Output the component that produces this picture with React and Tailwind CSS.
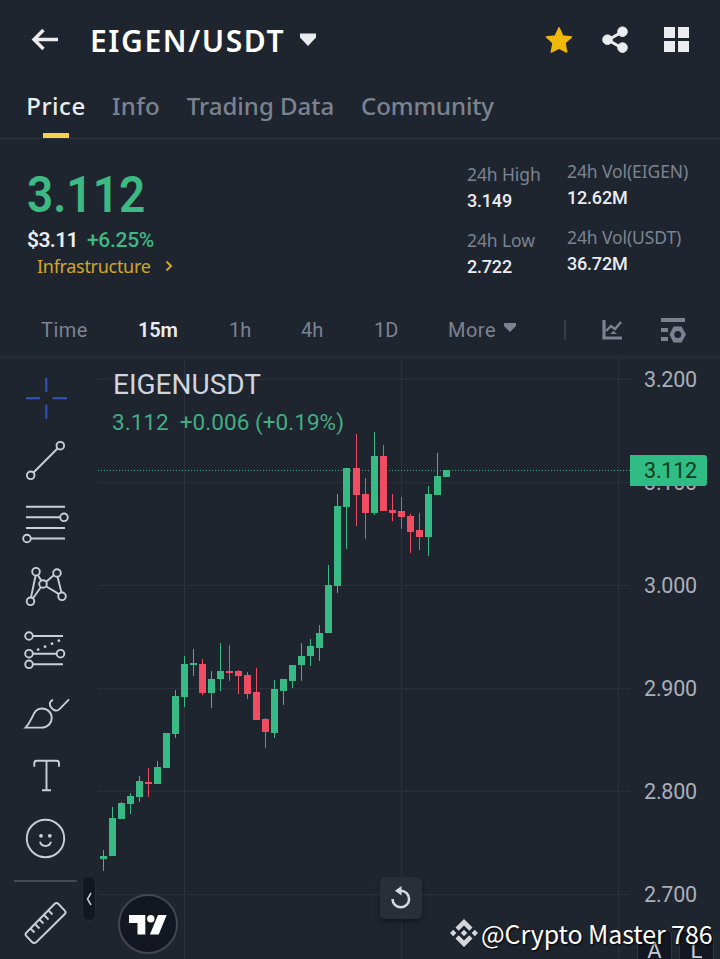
const TABS = [
  { label: "Price", active: true, style: "w-[58px] tracking-[0.5px]" },
  { label: "Info", style: "w-[48px] tracking-[0.3px]" },
  { label: "Trading Data", style: "w-[147px]" },
  { label: "Community", style: "w-[133px] tracking-[-0.1px]" },
];

const PRICES = ["3.200", "3.100", "3.000", "2.900", "2.800", "2.700"];

// [direction, wick top, body top, body bottom, wick bottom]
const CANDLES = [
  ["up", 850, 856, 859, 871],
  ["up", 807, 818, 856, 856],
  ["up", 802, 803, 819, 819],
  ["up", 793, 796, 804, 814],
  ["up", 776, 781, 797, 802],
  ["down", 768, 782, 784, 797],
  ["up", 761, 767, 784, 784],
  ["up", 733, 733, 768, 768],
  ["up", 690, 696, 734, 738],
  ["up", 656, 664, 697, 707],
  ["up", 649, 663, 665, 676],
  ["down", 659, 664, 693, 695],
  ["up", 671, 679, 693, 708],
  ["up", 643, 671, 679, 691],
  ["down", 645, 671, 673, 681],
  ["down", 670, 671, 676, 694],
  ["down", 672, 675, 694, 699],
  ["down", 668, 692, 720, 720],
  ["down", 718, 719, 732, 748],
  ["up", 680, 689, 733, 738],
  ["up", 679, 679, 691, 705],
  ["up", 665, 665, 681, 688],
  ["up", 643, 656, 665, 681],
  ["up", 639, 646, 656, 666],
  ["up", 625, 633, 648, 661],
  ["up", 565, 585, 633, 633],
  ["up", 494, 506, 586, 593],
  ["up", 468, 468, 507, 549],
  ["down", 434, 468, 495, 526],
  ["down", 478, 494, 513, 539],
  ["up", 432, 456, 513, 515],
  ["down", 445, 456, 511, 511],
  ["down", 494, 510, 513, 521],
  ["down", 497, 511, 517, 529],
  ["down", 514, 516, 532, 553],
  ["down", 513, 530, 537, 550],
  ["up", 486, 494, 537, 556],
  ["up", 453, 476, 495, 495],
  ["up", 470, 470, 477, 477],
];

function Header() {
  return (
    <header className="flex h-[80px] items-center">
      <svg viewBox="0 0 28 24" className="ml-[31px] h-6 w-7" fill="none" stroke="#eaecef" strokeWidth="3.4">
        <path d="M27 11.5H3M12.5 2L3 11.5l9.5 9.5" />
      </svg>
      <h1 className="ml-[31px] mt-[2px] w-[196px] whitespace-nowrap font-['Noto_Sans',sans-serif] text-[30px] font-semibold leading-[40px] tracking-[1.6px] text-white">
        EIGEN/USDT
      </h1>
      <svg viewBox="0 0 18 14" className="ml-[13px] h-[14px] w-[18px]" fill="#eaecef">
        <path d="M1 .5h16v4L9 13 1 4.5z" />
      </svg>
      <svg viewBox="0 0 28 28" className="ml-[228px] h-7 w-7" fill="#f0b90b" stroke="#f0b90b" strokeWidth="1.5" strokeLinejoin="round">
        <path d="M14 1.8l3.7 8.300 8.800.9-6.600 6 1.800 9-7.700-3.800L6.300 26l1.800-9-6.600-6 8.800-.9z" />
      </svg>
      <svg viewBox="0 0 28 28" className="ml-7 h-7 w-7" fill="#eaecef" stroke="#eaecef">
        <path d="M21 6L7 14l14 8" fill="none" strokeWidth="3" />
        <circle cx="21.5" cy="5.700" r="4.800" />
        <circle cx="6.500" cy="13.700" r="4.800" />
        <circle cx="21.5" cy="21.600" r="4.800" />
      </svg>
      <div className="mb-px ml-[35px] grid grid-cols-2 gap-[3px]">
        <i className="size-[11px] bg-[#eaecef]" />
        <i className="size-[11px] bg-[#eaecef]" />
        <i className="size-[11px] bg-[#eaecef]" />
        <i className="size-[11px] bg-[#eaecef]" />
      </div>
    </header>
  );
}

function Tabs() {
  return (
    <nav className="flex h-[59px] gap-[27px] border-b border-[#2e343e] pl-[27px] pt-[9px] font-['Noto_Sans',sans-serif] text-[24px] font-medium">
      {TABS.map((tab) => (
        <div key={tab.label} className={`flex flex-col items-center justify-between ${tab.style}`}>
          <span className={`whitespace-nowrap leading-[34px] ${tab.active ? "text-[#eaecef]" : "text-[#7b8391]"}`}>
            {tab.label}
          </span>
          {tab.active && <span className="h-[5px] w-[26px] bg-[#f5d24a]" />}
        </div>
      ))}
    </nav>
  );
}

function Stat({ label, value }) {
  return (
    <div className="h-[66px]">
      <div className="whitespace-nowrap font-['Noto_Sans',sans-serif] text-[17.500px] leading-[24px] tracking-[-0.1px] text-[#7b8391]">
        {label}
      </div>
      <div className="mt-[2px] font-['Roboto',sans-serif] text-[18px] font-medium leading-[26px] tracking-[-0.2px] text-[#eaecef]">
        {value}
      </div>
    </div>
  );
}

function Summary() {
  return (
    <section className="flex h-[163px]">
      <div className="w-[467px] pl-[27px] pt-[28px] font-['Roboto',sans-serif]">
        <div className="origin-left scale-x-[0.92] text-[50px] font-semibold leading-[56px] text-[#3dba84]">3.112</div>
        <div className="mt-[3px] flex gap-[9px] text-[21px] leading-[28px]">
          <span className="font-semibold tracking-[-0.6px] text-[#eaecef]">$3.11</span>
          <span className="font-medium tracking-[-0.3px] text-[#3dba84]">+6.25%</span>
        </div>
        <div className="-mt-px flex items-center gap-[14px] pl-[10px] font-['Noto_Sans',sans-serif] text-[18px] leading-[26px] text-[#d3a52a]">
          <span className="tracking-[-0.3px]">Infrastructure</span>
          <svg viewBox="0 0 8 12" className="h-3 w-2" fill="none" stroke="currentColor" strokeWidth="2">
            <path d="M1.500 1.500L6 6l-4.500 4.500" />
          </svg>
        </div>
      </div>
      <div className="w-[100px] pt-[23px]">
        <Stat label="24h High" value="3.149" />
        <Stat label="24h Low" value="2.722" />
      </div>
      <div className="pt-5">
        <Stat label="24h Vol(EIGEN)" value="12.62M" />
        <Stat label="24h Vol(USDT)" value="36.72M" />
      </div>
    </section>
  );
}

function Intervals() {
  return (
    <div className="flex h-[57px] items-center border-b-4 border-[#252b36] pt-[2px] font-['Roboto',sans-serif] text-[20px] text-[#7b8391]">
      <span className="ml-[41px] w-[97px] tracking-[0.5px]">Time</span>
      <span className="w-[91px] font-semibold tracking-[-0.2px] text-[#eaecef]">15m</span>
      <span className="w-[72px]">1h</span>
      <span className="w-[73px]">4h</span>
      <span className="w-[74px]">1D</span>
      <span className="w-[49px] tracking-[0.5px]">More</span>
      <svg viewBox="0 0 12 9" className="mb-1 ml-[7px] h-[9px] w-3" fill="#7b8391">
        <path d="M0 0h12v3L6 9 0 3z" />
      </svg>
      <span className="ml-[48px] h-5 w-[2px] bg-[#343b47]" />
      <svg viewBox="0 0 20 20" className="ml-[36px] size-5" fill="none" stroke="#7b8391">
        <path d="M2 0v18h18" strokeWidth="3.200" />
        <path d="M4 11l5-5 4 3 6-7" strokeWidth="2.400" />
        <path d="M8 14l3.500-3 3.500 3z" fill="#7b8391" stroke="none" />
      </svg>
      <svg viewBox="0 0 26 26" className="ml-[38px] size-[26px]" fill="#7b8391">
        <path d="M1 1h24v4H1zM1 11h7v4H1zM1 20h7v4H1z" />
        <path fillRule="evenodd" d="M13.500 9.500h8L26 17.500l-4.500 8h-8L9.500 17.500zM17.700 14a3.500 3.500 0 100 7 3.500 3.500 0 000-7z" />
      </svg>
    </div>
  );
}

function Tool({ children, color = "#c9ced8" }) {
  return (
    <svg viewBox="0 0 92 63" className="h-[63px] w-[92px] shrink-0" fill="none" stroke={color} strokeWidth="1.9">
      {children}
    </svg>
  );
}

function Toolbar() {
  return (
    <aside className="flex w-[98px] flex-col pt-[7px]">
      {/* Crosshair */}
      <Tool color="#3557bd">
        <path d="M46.300 12v14M46.300 38.700v14M26 32.300h14M52.700 32.300H67" />
      </Tool>
      {/* Trend line */}
      <Tool>
        <path d="M33.500 43.500l24-24" />
        <circle cx="60.300" cy="16.700" r="3.800" />
        <circle cx="30.700" cy="46.300" r="3.800" />
      </Tool>
      {/* Fibonacci */}
      <Tool>
        <path d="M26 14.700h39M26 25.300h34M26 36h39M31 46.500h34" />
        <circle cx="64" cy="25.300" r="3.800" />
        <circle cx="27" cy="46.500" r="3.800" />
      </Tool>
      {/* Pattern */}
      <Tool>
        <path d="M31 42.500l4.600-22M37.800 20l3.400 5.500M46.200 26.700l7.500-6.400M57.500 21.800l4 15.700M46 31.300l13 7.800M40.800 32.300L33 43.200" />
        <circle cx="36" cy="16.700" r="3.800" />
        <circle cx="57" cy="18" r="3.800" />
        <circle cx="43" cy="29" r="3.800" />
        <circle cx="30.500" cy="46.300" r="3.800" />
        <circle cx="62" cy="41.300" r="3.800" />
      </Tool>
      {/* Forecast */}
      <Tool>
        <path d="M33 18h30M33 35.700h24M33 46.300h30" />
        <path d="M37 32l24-10.200" strokeWidth="2.400" strokeDasharray="2.500 5" />
        <circle cx="29" cy="18" r="3.800" />
        <circle cx="29" cy="35.700" r="3.800" />
        <circle cx="60.500" cy="35.700" r="3.800" />
        <circle cx="29" cy="46.300" r="3.800" />
      </Tool>
      {/* Brush */}
      <Tool>
        <path d="M25.500 46.600C34 38 32.500 27.500 41.700 27.500c6 0 10 4.200 10 9.500s-4.200 9.600-10 9.600z" />
        <path d="M53 18.600c-4 2-4 5.400-1.500 8.300 2.500 3 5.500 3.600 8 1.200L69 18.400" />
      </Tool>
      {/* Text */}
      <Tool>
        <path d="M34.300 22.700v-3.500q0-2.500 2.500-2.500h19.700q2.500 0 2.500 2.500v3.500M46.500 16.700v29.600M42 46.300h9" />
      </Tool>
      {/* Emoji */}
      <Tool>
        <circle cx="45.500" cy="31.500" r="18.700" />
        <circle cx="41" cy="28.800" r="1.900" fill="#c9ced8" stroke="none" />
        <circle cx="49.800" cy="28.800" r="1.900" fill="#c9ced8" stroke="none" />
        <path d="M40 34.800c1.500 5.600 9.500 5.600 11 0" />
      </Tool>
      <div className="ml-[14px] mt-[10px] h-[2px] w-[63px] shrink-0 bg-[#434853]" />
      {/* Ruler */}
      <svg viewBox="0 0 92 63" className="mt-[10px] h-[63px] w-[92px] shrink-0" fill="none" stroke="#c9ced8" strokeWidth="1.9">
        <path d="M26.500 40.500L54.500 12q2-2 4 0l6.300 6.600q1.700 1.700 0 3.400L36.500 50q-2.500 2-4.500 0l-5.800-6q-1.500-2 .3-3.500z" />
        <path d="M30.500 36.500l4 4M35 32l4.500 4.500M39.500 27.500l4 4M44 23l4.500 4.500M48.500 18.500l4 4" />
      </svg>
    </aside>
  );
}

function Chart() {
  return (
    <svg viewBox="98 359 534 600" className="h-[600px] w-[534px] shrink-0" shapeRendering="crispEdges">
      {PRICES.map((p, i) => (
        <rect key={p} x="98" y={379 + i * 103} width="532" height="1" fill="#2b313b" />
      ))}
      {[184, 401, 618].map((x) => (
        <rect key={x} x={x} y="359" width="1" height="600" fill="#2b313b" />
      ))}
      <path d="M98 470.500H630" stroke="#4aa585" strokeDasharray="1 2" />
      {CANDLES.map(([dir, high, top, bottom, low], i) => {
        const x = 100 + i * 9 + (i > 27 ? 1 : 0);
        const fill = dir === "up" ? "#38ba84" : "#f04d63";
        return (
          <g key={i} fill={fill}>
            <rect x={x + 3} y={high} width="1" height={low - high} />
            <rect x={x} y={top} width="7" height={bottom - top} />
          </g>
        );
      })}
    </svg>
  );
}

function PriceScale() {
  return (
    <div className="flex w-[88px] flex-col font-['Roboto',sans-serif] text-[21.500px] text-[#a9aeb9]">
      <div className="-mt-[30px] flex flex-col">
        {PRICES.map((p) => (
          <span key={p} className="flex h-[103px] items-center pl-3 tracking-[-0.2px]">
            {p}
          </span>
        ))}
      </div>
    </div>
  );
}

function ChartOverlays() {
  return (
    <>
      {/* Legend */}
      <div className="absolute left-[113px] top-[8px] font-['Roboto',sans-serif]">
        <div className="text-[28px] leading-[36px] text-[#d1d4dc]">EIGENUSDT</div>
        <div className="-ml-px flex gap-[11px] whitespace-nowrap text-[22.500px] leading-[38px] tracking-[0.05px] text-[#43ad82]">
          <span>3.112</span>
          <span>+0.006 (+0.19%)</span>
        </div>
      </div>

      {/* Last price */}
      <div className="absolute left-[630px] top-[96px] flex h-[31px] w-[77px] items-center rounded-r-[3px] bg-[#2fbd85] pl-[14px] pt-[2px] font-['Roboto',sans-serif] text-[21.500px] tracking-[-0.2px] text-[#0b3a1c]">
        3.112
      </div>

      {/* Toolbar handle */}
      <div className="absolute left-[82px] top-[517px] flex h-[45px] w-[14px] items-center justify-center rounded-[6px] border border-[#252a35] bg-[#131722]">
        <svg viewBox="0 0 6 14" className="h-[14px] w-[6px]" fill="none" stroke="#c9ced8" strokeWidth="1.500">
          <path d="M5 1L1.500 7 5 13" />
        </svg>
      </div>

      {/* Chart provider logo */}
      <div className="absolute left-[118px] top-[535px] flex size-[60px] items-center justify-center rounded-full border-2 border-[#434651] bg-[#131722]">
        <svg viewBox="0 0 38 20" className="mt-px h-5 w-[38px]" fill="#fff">
          <path d="M0 0h16.300v19.500H8.500V8H0zM29 0h8.700l-8 19.500h-8.800z" />
          <circle cx="21.800" cy="3.700" r="3.700" />
        </svg>
      </div>

      {/* Reset */}
      <div className="absolute left-[380px] top-[518px] flex h-[42px] w-[42px] items-center justify-center rounded-[5px] bg-[#2a2e39] shadow-md shadow-black/30">
        <svg viewBox="0 0 24 26" className="h-[26px] w-6" fill="none" stroke="#d5d9e1" strokeWidth="2.500">
          <path d="M3.500 14a8.300 8.300 0 108.300-8.300H8" />
          <path d="M12.500 1v9.500L6 5.700z" fill="#d5d9e1" stroke="none" />
        </svg>
      </div>

      {/* Scale modes */}
      <div className="absolute left-[637px] top-[571px] flex gap-[7px] font-['Roboto',sans-serif] text-[22px] leading-[40px] text-[#c5c9d3]">
        <span className="h-10 w-[35px] rounded-[5px] border border-[#2f3541] bg-[#131722] text-center">A</span>
        <span className="h-10 w-[35px] rounded-[5px] border border-[#2f3541] bg-[#131722] text-center">L</span>
      </div>

      {/* Author tag */}
      <div className="absolute left-[450px] top-[556px] flex items-center gap-[3px]">
        <svg viewBox="0 0 28 28" className="h-7 w-7" fill="#d6d7d9">
          <path d="M14 0l8.500 8.500-3.200 3.200L14 6.400l-5.300 5.300-3.200-3.200zM14 28l-8.500-8.500 3.200-3.200 5.300 5.300 5.300-5.300 3.200 3.200zM3.200 10.800L6.400 14l-3.200 3.200L0 14zM24.800 10.800L28 14l-3.200 3.200-3.200-3.200zM14 10.800l3.200 3.200-3.200 3.200-3.200-3.200z" />
        </svg>
        <span className="whitespace-nowrap font-['Noto_Sans_CJK_SC',sans-serif] text-[25px] leading-[36px] tracking-[-0.1px] text-white [text-shadow:1px_1px_2px_#000]">
          @Crypto Master 786
        </span>
      </div>
    </>
  );
}

export default function App() {
  return (
    <div className="h-[959px] w-[720px] overflow-hidden bg-[#1f252f]">
      <Header />
      <Tabs />
      <Summary />
      <Intervals />
      <main className="relative flex h-[600px] overflow-hidden">
        <Toolbar />
        <Chart />
        <PriceScale />
        <ChartOverlays />
      </main>
    </div>
  );
}
